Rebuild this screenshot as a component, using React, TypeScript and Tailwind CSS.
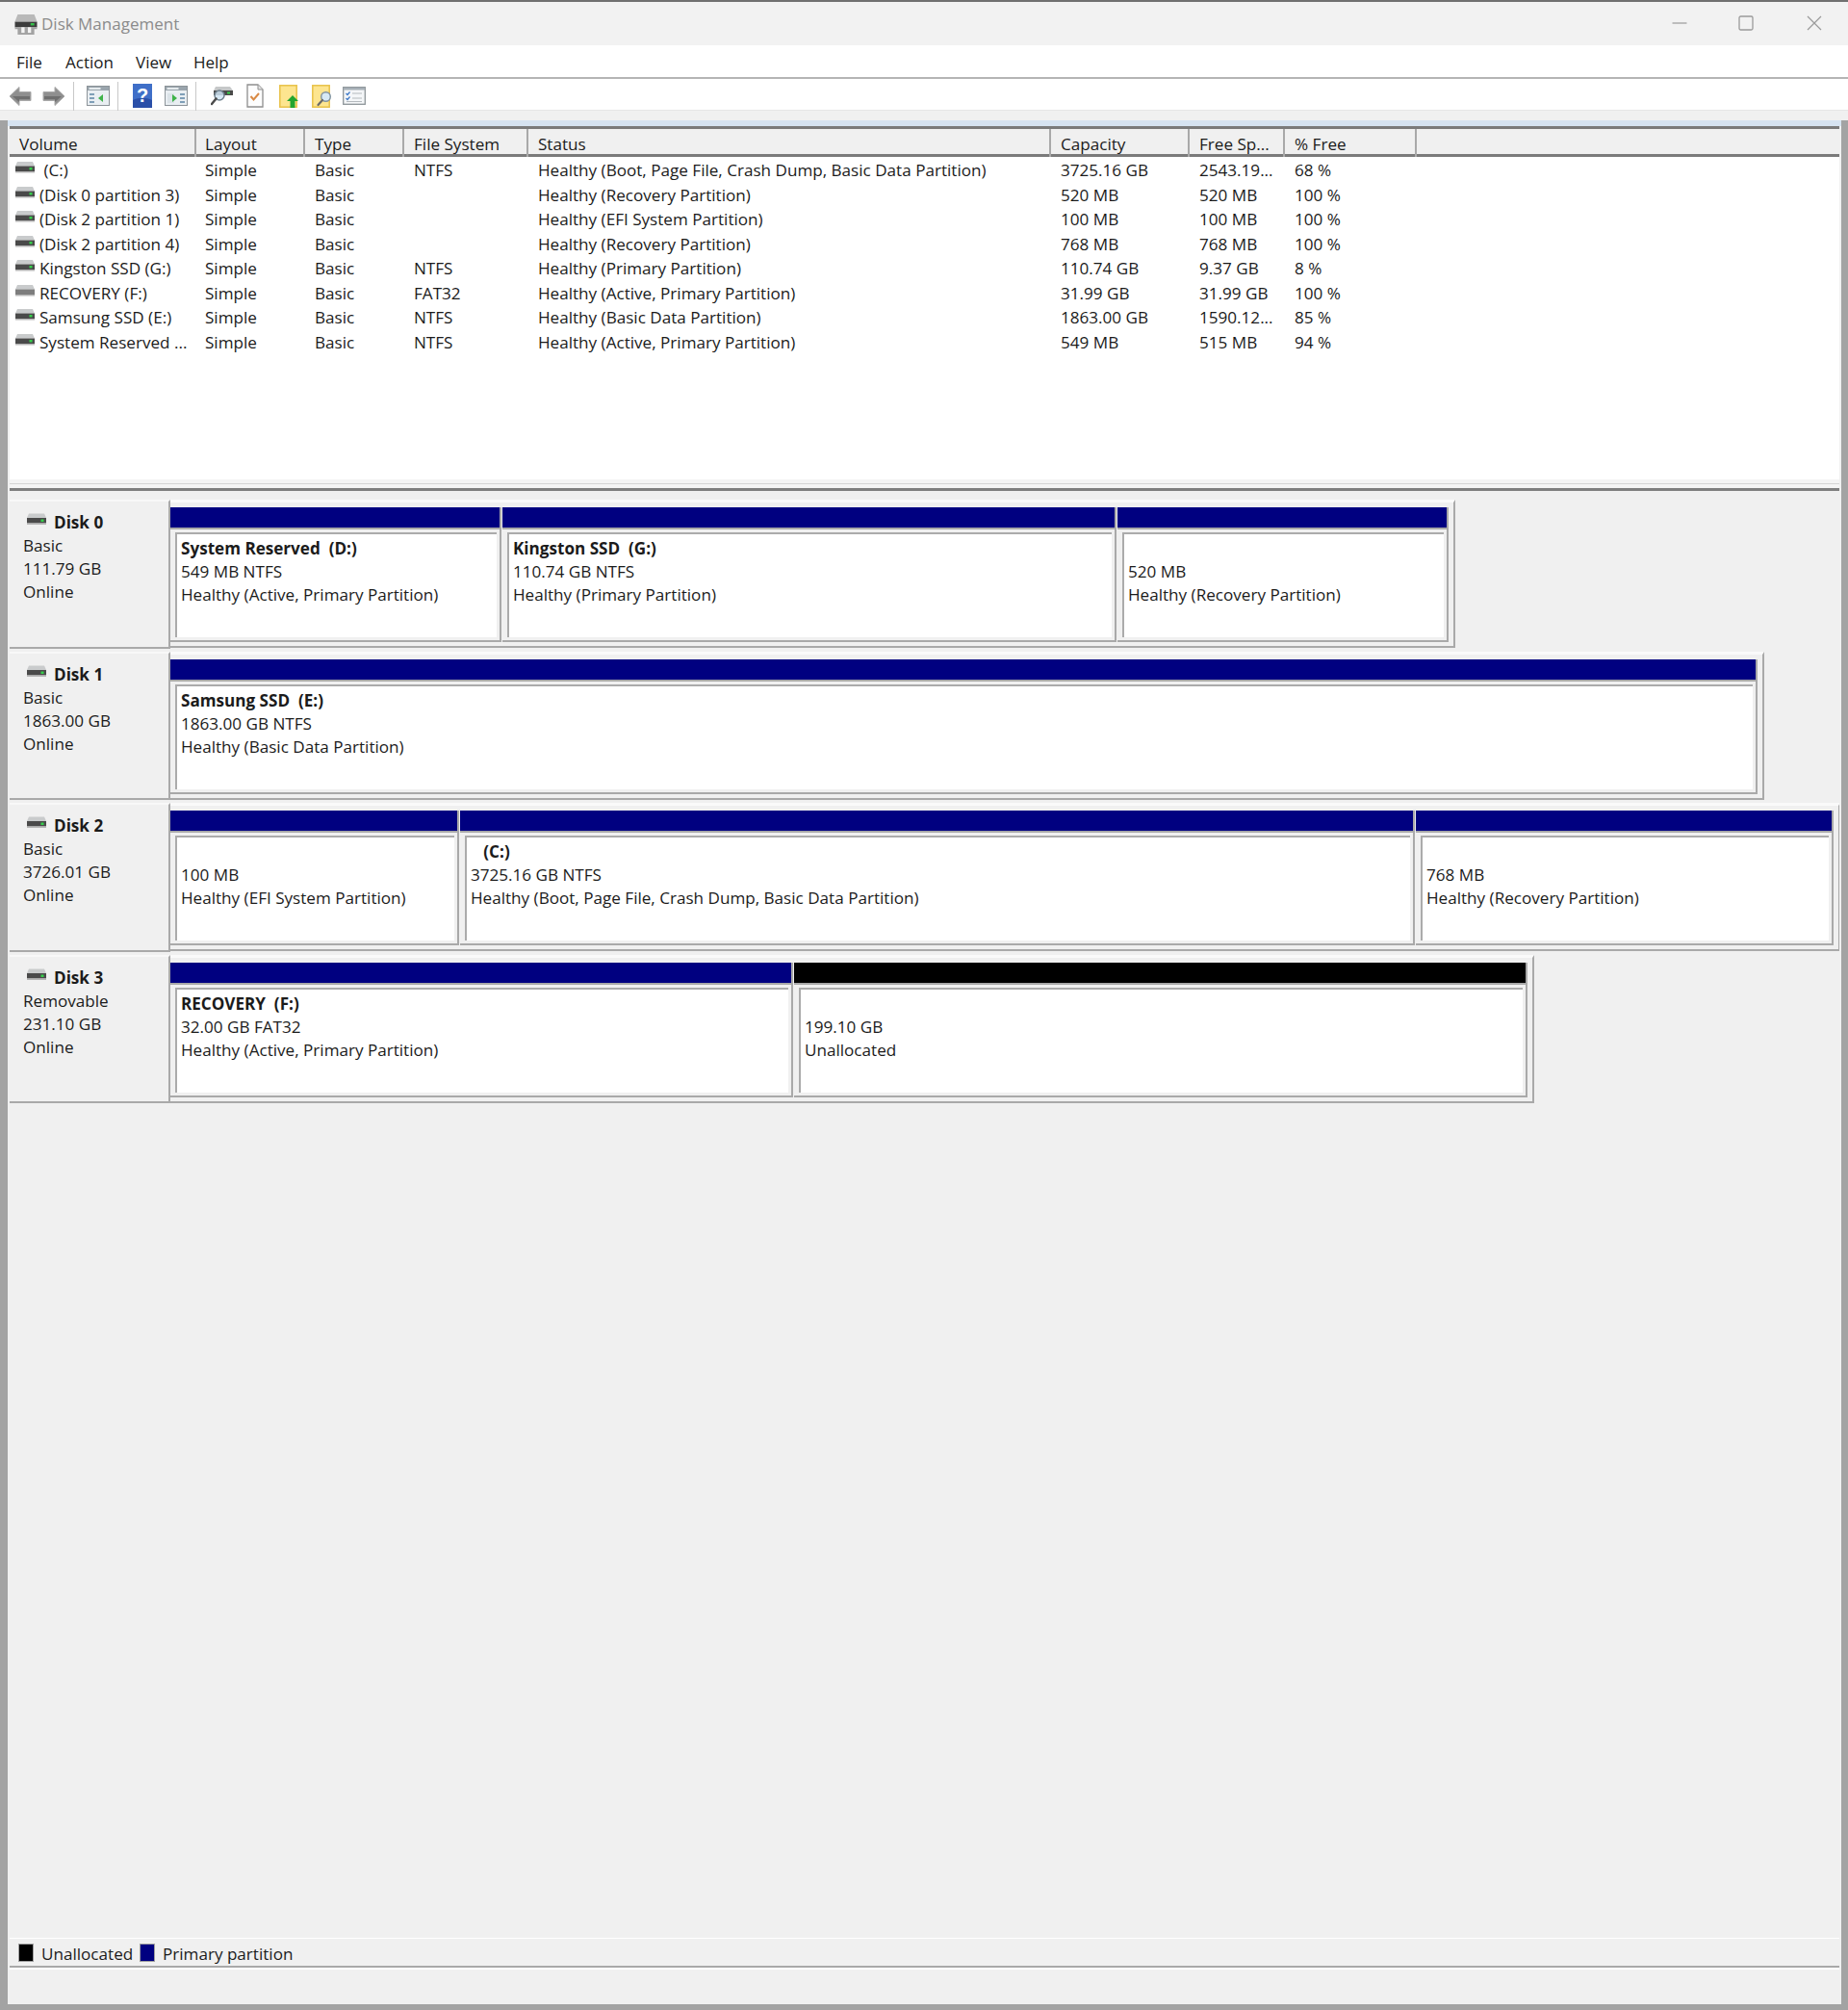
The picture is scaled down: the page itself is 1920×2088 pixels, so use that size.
const font = { fontFamily: '"Open Sans", "Noto Sans", sans-serif' };

const columns = [
  { label: "Volume", cls: "pl-[10px]" },
  { label: "Layout", cls: "pl-[9px]" },
  { label: "Type", cls: "pl-[10px]" },
  { label: "File System", cls: "pl-[10px]" },
  { label: "Status", cls: "pl-[10px]" },
  { label: "Capacity", cls: "pl-[10px]" },
  { label: "Free Sp...", cls: "pl-[10px]" },
  { label: "% Free", cls: "pl-[10px]" },
];

const volumes = [
  ["\u00a0(C:)", "Simple", "Basic", "NTFS", "Healthy (Boot, Page File, Crash Dump, Basic Data Partition)", "3725.16 GB", "2543.19...", "68 %"],
  ["(Disk 0 partition 3)", "Simple", "Basic", "", "Healthy (Recovery Partition)", "520 MB", "520 MB", "100 %"],
  ["(Disk 2 partition 1)", "Simple", "Basic", "", "Healthy (EFI System Partition)", "100 MB", "100 MB", "100 %"],
  ["(Disk 2 partition 4)", "Simple", "Basic", "", "Healthy (Recovery Partition)", "768 MB", "768 MB", "100 %"],
  ["Kingston SSD (G:)", "Simple", "Basic", "NTFS", "Healthy (Primary Partition)", "110.74 GB", "9.37 GB", "8 %"],
  ["RECOVERY (F:)", "Simple", "Basic", "FAT32", "Healthy (Active, Primary Partition)", "31.99 GB", "31.99 GB", "100 %"],
  ["Samsung SSD (E:)", "Simple", "Basic", "NTFS", "Healthy (Basic Data Partition)", "1863.00 GB", "1590.12...", "85 %"],
  ["System Reserved ...", "Simple", "Basic", "NTFS", "Healthy (Active, Primary Partition)", "549 MB", "515 MB", "94 %"],
];

const disks = [
  {
    name: "Disk 0",
    lines: ["Basic", "111.79 GB", "Online"],
    parts: [
      { w: 344, name: "System Reserved  (D:)", size: "549 MB NTFS", status: "Healthy (Active, Primary Partition)" },
      { w: 638, name: "Kingston SSD  (G:)", size: "110.74 GB NTFS", status: "Healthy (Primary Partition)" },
      { w: 344, name: "", size: "520 MB", status: "Healthy (Recovery Partition)" },
    ],
  },
  {
    name: "Disk 1",
    lines: ["Basic", "1863.00 GB", "Online"],
    parts: [{ w: 1649, name: "Samsung SSD  (E:)", size: "1863.00 GB NTFS", status: "Healthy (Basic Data Partition)" }],
  },
  {
    name: "Disk 2",
    lines: ["Basic", "3726.01 GB", "Online"],
    parts: [
      { w: 300, name: "", size: "100 MB", status: "Healthy (EFI System Partition)" },
      { w: 992, name: "\u00a0\u00a0\u00a0(C:)", size: "3725.16 GB NTFS", status: "Healthy (Boot, Page File, Crash Dump, Basic Data Partition)" },
      { w: 434, name: "", size: "768 MB", status: "Healthy (Recovery Partition)" },
    ],
  },
  {
    name: "Disk 3",
    lines: ["Removable", "231.10 GB", "Online"],
    parts: [
      { w: 647, name: "RECOVERY  (F:)", size: "32.00 GB FAT32", status: "Healthy (Active, Primary Partition)" },
      { w: 762, name: "", size: "199.10 GB", status: "Unallocated", unallocated: true },
    ],
  },
];

function DriveIcon({ dim = false, className = "" }: { dim?: boolean; className?: string }) {
  return (
    <svg viewBox="0 0 20 12" className={className}>
      <path d="M2 0.5h16l2 4.5H0z" fill="#c9cbcc" />
      <path d="M0 5h20v5.5H0z" fill={dim ? "#7d7d7d" : "#4a4a4a"} />
      <path d="M0 10.5h20V12H0z" fill="#b5b5b5" />
      {!dim && <rect x="14.5" y="6.5" width="3" height="2.5" fill="#35d04a" />}
    </svg>
  );
}

function TitleIcon() {
  return (
    <svg viewBox="0 0 24 24" className="h-[23px] w-[24px]">
      <path d="M3 2h18l3 8H0z" fill="#b9b9b9" />
      <path d="M0 10h24v6H0z" fill="#3d3d3d" />
      <rect x="17" y="11.5" width="4" height="2.5" fill="#35c24a" />
      <path d="M0 16h24v2h-3v6H3v-6H0z" fill="#a3a3a3" />
      <rect x="7" y="16" width="3.5" height="6" fill="#f4f4f4" />
      <rect x="14" y="16" width="3.5" height="6" fill="#f4f4f4" />
    </svg>
  );
}

function ArrowIcon({ flip = false }: { flip?: boolean }) {
  return (
    <svg viewBox="0 0 24 24" className={flip ? "h-[24px] w-[24px] -scale-x-100" : "h-[24px] w-[24px]"}>
      <path d="M1 12 11 2.5V7.5h12v9H11v5z" fill="#8f8f8f" stroke="#a9a9a9" strokeWidth="1" />
      <path d="M4 12h18v3H11v3z" fill="#6f6f6f" />
    </svg>
  );
}

function PaneIcon({ right = false }: { right?: boolean }) {
  return (
    <svg viewBox="0 0 24 21" className="h-[21px] w-[24px]">
      <rect x="0.5" y="0.5" width="23" height="20" fill="#e9eef2" stroke="#8d9499" />
      <rect x="1" y="1" width="22" height="4" fill="#9aa5ad" />
      <rect x="2.5" y="2" width="12" height="2" fill="#e6ebee" />
      {right ? (
        <>
          <rect x="3" y="8" width="7" height="10" fill="#dbe3e8" />
          <path d="M8 9l5 4-5 4z" fill="#3fb34a" />
          <path d="M16 8h5v2h-5zM16 12h5v2h-5zM16 16h5v2h-5z" fill="#7f9fb8" />
        </>
      ) : (
        <>
          <path d="M3 8h5v2H3zM3 12h5v2H3zM3 16h5v2H3z" fill="#7f9fb8" />
          <path d="M17 9l-5 4 5 4z" fill="#3fb34a" />
        </>
      )}
    </svg>
  );
}

function HelpIcon() {
  return (
    <svg viewBox="0 0 20 25" className="h-[25px] w-[20px]">
      <rect width="20" height="25" fill="#3f6fc8" />
      <path d="M0 17c6-3 14-3 20 0v8H0z" fill="#2a4fa8" />
      <text x="10" y="19" textAnchor="middle" fontSize="20" fontWeight="700" fill="#fff" fontFamily="Liberation Sans, sans-serif">
        ?
      </text>
    </svg>
  );
}

function ScanIcon() {
  return (
    <svg viewBox="0 0 23 21" className="h-[21px] w-[23px]">
      <path d="M5 1h15l3 4H3z" fill="#c6c8c9" />
      <path d="M3 5h20v5H3z" fill="#4a4a4a" />
      <rect x="17" y="6.5" width="3" height="2" fill="#35d04a" />
      <circle cx="9" cy="10" r="5" fill="#cfe4f3" fillOpacity="0.85" stroke="#6d7f8c" strokeWidth="1.5" />
      <path d="M5.5 13.5 1 19" stroke="#4b4b4b" strokeWidth="2.5" strokeLinecap="round" />
    </svg>
  );
}

function CheckDocIcon() {
  return (
    <svg viewBox="0 0 18 25" className="h-[25px] w-[18px]">
      <path d="M1 1h11l5 5v18H1z" fill="#fdfdfd" stroke="#8f8f8f" strokeWidth="1.3" />
      <path d="M12 1v5h5" fill="#e4e4e4" stroke="#8f8f8f" strokeWidth="1" />
      <path d="M4.5 13l3 3.5L13 10" fill="none" stroke="#d98a45" strokeWidth="2" />
    </svg>
  );
}

function FolderUpIcon() {
  return (
    <svg viewBox="0 0 20 24" className="h-[24px] w-[20px]">
      <rect x="0.8" y="0.8" width="17.4" height="22.4" fill="#fde58f" stroke="#e8c24a" strokeWidth="1.5" />
      <path d="M14 11l6 6h-3.5v7h-5v-7H8z" fill="#22a52f" />
    </svg>
  );
}

function FolderFindIcon() {
  return (
    <svg viewBox="0 0 21 24" className="h-[24px] w-[21px]">
      <rect x="0.8" y="0.8" width="17.4" height="22.4" fill="#fde58f" stroke="#e8c24a" strokeWidth="1.5" />
      <circle cx="14.5" cy="12.5" r="4.8" fill="#d7e9f5" stroke="#80929e" strokeWidth="1.4" />
      <path d="M11 16l-4.5 5" stroke="#6a6a6a" strokeWidth="2.2" strokeLinecap="round" />
    </svg>
  );
}

function ChecklistIcon() {
  return (
    <svg viewBox="0 0 24 19" className="h-[19px] w-[24px]">
      <rect x="0.7" y="0.7" width="22.6" height="17.6" fill="#f4f6f8" stroke="#8d9499" strokeWidth="1.3" />
      <rect x="1" y="1" width="22" height="2.5" fill="#a6afb6" />
      <path d="M3.5 7l1.5 1.5L7.5 5.5M3.5 12l1.5 1.5L7.5 10.5" fill="none" stroke="#3c78c8" strokeWidth="1.2" />
      <path d="M10 7h10M10 12h10M4 15.5h16" stroke="#b4b9bd" strokeWidth="1.2" />
    </svg>
  );
}

function Separator() {
  return <div className="h-[30px] w-px shrink-0 bg-[#c8c8c8]" />;
}

function Partition({ part }: { part: (typeof disks)[number]["parts"][number] & { unallocated?: boolean } }) {
  return (
    <div className="flex shrink-0 flex-col border-r-2 border-[#a9a9a9]" style={{ width: part.w }}>
      <div className={part.unallocated ? "h-[21px] bg-black" : "h-[21px] bg-[#000080]"} />
      <div className="h-[2px] bg-[#a9a9a9]" />
      <div className="flex h-[115px] flex-col bg-[#f0f0f0] pl-[5px] pr-[3px] pt-[3px] pb-[3px]">
        <div className="h-full border-l-2 border-t-2 border-[#ababab] bg-white pl-[4px] pt-[3px] leading-[24px]">
          <div className="h-6 whitespace-pre font-bold">{part.name}</div>
          <div className="h-6">{part.size}</div>
          <div className="h-6">{part.status}</div>
        </div>
      </div>
      <div className="h-[2px] bg-[#a9a9a9]" />
    </div>
  );
}

function DiskRow({ disk }: { disk: (typeof disks)[number] }) {
  return (
    <div className="flex h-[157.5px] shrink-0 overflow-hidden">
      <div className="mt-[3px] w-[167px] shrink-0 border-b-2 border-r-2 border-t-2 border-b-[#a9a9a9] border-r-[#a9a9a9] border-t-[#f8f8f8] pl-[14px] pt-[10px] leading-[24px]">
        <div className="flex h-6 items-center">
          <DriveIcon className="ml-[4px] mr-[8px] h-[12px] w-[20px] -translate-y-[4px]" />
          <span className="font-bold">{disk.name}</span>
        </div>
        {disk.lines.map((line) => (
          <div key={line} className="h-6">
            {line}
          </div>
        ))}
      </div>
      <div className="mt-[3px] h-[154px] w-fit border-b-2 border-r-2 border-t-[3px] border-b-[#a9a9a9] border-r-[#a9a9a9] border-t-[#fafafa] pr-[5px] pt-[5px]">
        <div className="flex gap-px">
          {disk.parts.map((part, i) => (
            <Partition key={i} part={part} />
          ))}
        </div>
      </div>
    </div>
  );
}

export default function App() {
  return (
    <div
      className="flex h-[2088px] w-[1920px] flex-col overflow-hidden border-t-2 border-[#707070] bg-[#f0f0f0] text-[17.1px] text-[#1b1b1b]"
      style={font}
    >
      <div className="flex h-[45px] shrink-0 items-center bg-[#f2f2f2] pl-[15px]">
        <TitleIcon />
        <span className="ml-[4px] text-[17px] text-[#8b8b8b]">Disk Management</span>
        <div className="ml-auto flex items-center pb-[1px] pr-[27px]">
          <svg viewBox="0 0 16 16" className="mr-[53px] h-[16px] w-[16px]">
            <path d="M0.5 8h15" stroke="#9a9a9a" strokeWidth="1.2" />
          </svg>
          <svg viewBox="0 0 16 16" className="mr-[55px] h-[16px] w-[16px]">
            <rect x="1" y="1" width="14" height="14" rx="1.5" fill="none" stroke="#9a9a9a" strokeWidth="1.3" />
          </svg>
          <svg viewBox="0 0 16 16" className="h-[16px] w-[16px]">
            <path d="M1 1l14 14M15 1 1 15" stroke="#9a9a9a" strokeWidth="1.2" />
          </svg>
        </div>
      </div>

      <div className="flex h-[35px] shrink-0 items-center border-b-2 border-[#b5b5b5] bg-white pl-[17px] pt-[2px] text-[17px]">
        <span className="w-[51px]">File</span>
        <span className="w-[73px]">Action</span>
        <span className="w-[60px]">View</span>
        <span>Help</span>
      </div>

      <div className="flex h-[33px] shrink-0 items-center border-b border-[#e6e6e6] bg-white pl-[9px] pt-[3px]">
        <ArrowIcon />
        <div className="w-[11px]" />
        <ArrowIcon flip />
        <div className="w-[8px]" />
        <Separator />
        <div className="w-[13px]" />
        <PaneIcon />
        <div className="w-[8px]" />
        <Separator />
        <div className="w-[15px]" />
        <HelpIcon />
        <div className="w-[13px]" />
        <PaneIcon right />
        <div className="w-[8px]" />
        <Separator />
        <div className="w-[15px]" />
        <ScanIcon />
        <div className="w-[14px]" />
        <CheckDocIcon />
        <div className="w-[16px]" />
        <FolderUpIcon />
        <div className="w-[14px]" />
        <FolderFindIcon />
        <div className="w-[11px]" />
        <ChecklistIcon />
      </div>

      <div className="h-[10px] shrink-0 bg-[#f0f0f0]" />

      <div className="flex min-h-0 flex-1">
        <div className="w-[8px] shrink-0 bg-[#a3a3a3]" />
        <div className="flex min-w-0 flex-1 flex-col">
          <div className="h-[6px] shrink-0 bg-[#d6e3f1]" />

          <div className="flex min-h-0 flex-1 flex-col pl-[2px] pr-[2px]">
            <div className="flex h-[367px] shrink-0 flex-col bg-white">
              <div className="grid h-[32px] shrink-0 grid-cols-[194px_113px_103px_129px_543px_144px_99px_137px_1fr] border-y-[3px] border-b-[#7b7b7b] border-t-[#7b7b7b] bg-[#f0f0f0]">
                {columns.map((col) => (
                  <div key={col.label} className={`flex items-center border-r-2 border-[#a9a9a9] pt-[3px] ${col.cls}`}>
                    {col.label}
                  </div>
                ))}
                <div />
              </div>
              <div className="pt-[1px]">
                {volumes.map((row) => (
                  <div
                    key={row[0]}
                    className="grid h-[25.5px] grid-cols-[194px_113px_103px_129px_543px_144px_99px_137px_1fr] items-center"
                  >
                    {row.map((cell, i) => (
                      <div key={i} className={`${columns[i].cls} whitespace-pre ${i === 0 ? "flex items-center" : ""}`}>
                        {i === 0 ? (
                          <>
                            <DriveIcon dim={row[0].startsWith("RECOVERY")} className="-ml-[4px] mr-[5px] h-[13px] w-[20px] shrink-0 -translate-y-[3px]" />
                            {cell}
                          </>
                        ) : (
                          cell
                        )}
                      </div>
                    ))}
                  </div>
                ))}
              </div>
            </div>
            <div className="h-[12px] shrink-0 border-b-[3px] border-b-[#7f7f7f] bg-[#f4f4f4] pt-[4px]">
              <div className="h-[1px] bg-[#d4d4d4]" />
            </div>

            <div className="min-h-0 flex-1 pt-[6px]">
              {disks.map((disk) => (
                <DiskRow key={disk.name} disk={disk} />
              ))}
            </div>

            <div className="flex h-[31px] shrink-0 items-center border-b-2 border-t border-b-[#a9a9a9] border-t-white pl-[9px]">
              <span className="h-[19px] w-[16px] border border-[#a0a0a0] bg-black" />
              <span className="ml-[8px] w-[102px] pt-[3px]">Unallocated</span>
              <span className="h-[19px] w-[16px] border border-[#a0a0a0] bg-[#000080]" />
              <span className="ml-[8px] pt-[3px]">Primary partition</span>
            </div>
            <div className="h-[38px] shrink-0 border-t-2 border-white" />
          </div>
        </div>
        <div className="w-[7px] shrink-0 bg-[#a3a3a3]" />
      </div>
      <div className="h-[6px] shrink-0 bg-[#a3a3a3]" />
    </div>
  );
}
